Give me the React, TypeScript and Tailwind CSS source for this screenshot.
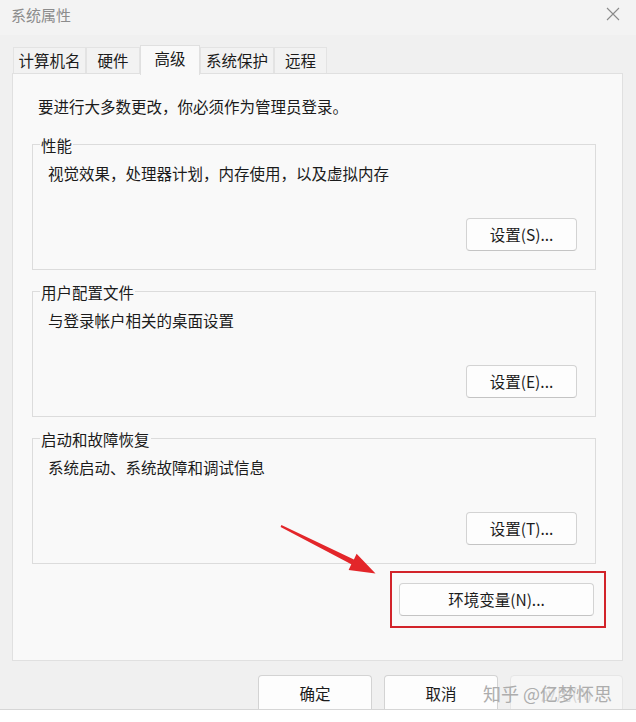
import React from "react";

const font = { fontFamily: '"Noto Sans CJK SC", "Noto Sans", sans-serif' };

function Btn({ label, className = "" }: { label: string; className?: string }) {
  return (
    <div
      className={
        "flex items-center justify-center rounded-[4px] border border-[#d3d3d3] border-b-[#c4c4c4] bg-[#fdfdfd] text-[15.5px] text-[#1b1b1b] " +
        className
      }
    >
      {label}
    </div>
  );
}

function Group({ title, desc, btn }: { title: string; desc: string; btn: string }) {
  return (
    <fieldset className="mt-[13px] border border-[#dcdcdc] pl-[7px] pr-[18px] pb-[18px]">
      <legend className="px-[1px] leading-[18px] text-[15.5px]">{title}</legend>
      <p className="pl-[8px] mt-[9px] leading-[20px]">{desc}</p>
      <div className="flex justify-end mt-[35px]">
        <Btn label={btn} className="w-[111px] h-[33px]" />
      </div>
    </fieldset>
  );
}

export default function App() {
  const tabs = [
    { t: "计算机名", w: "w-[73px]" },
    { t: "硬件", w: "w-[54px]" },
  ];
  return (
    <div className="relative w-[636px] h-[722px] bg-white text-[15.5px] text-[#1b1b1b]" style={font}>
      <div className="h-[710px] bg-[#f0f0f0] border-b border-[#d6d6d6] flex flex-col">
        {/* title bar */}
        <div className="h-[35px] bg-[#f3f3f3] flex items-center justify-between pl-[11px] pr-[16px]">
          <span className="text-[#8c8c8c] text-[15px] leading-[20px] -mt-[5px]">系统属性</span>
          <svg width="14" height="14" viewBox="0 0 14 14" className="-mt-[6px]">
            <path d="M1 1 L13 13 M13 1 L1 13" stroke="#8a8a8a" strokeWidth="1.1" fill="none" />
          </svg>
        </div>
        {/* tabs */}
        <div className="h-[38px] flex items-end pl-[13px]">
          {tabs.map((x) => (
            <div
              key={x.t}
              className={
                "h-[26px] flex items-center justify-center bg-[#f2f2f2] border border-b-0 border-[#e3e3e3] " + x.w
              }
            >
              {x.t}
            </div>
          ))}
          <div className="relative z-10 w-[60px] h-[30px] -mb-[2px] flex items-center justify-center bg-[#f9f9f9] border border-b-0 border-[#e0e0e0] pb-[3px]">
            高级
          </div>
          <div className="h-[26px] w-[74px] flex items-center justify-center bg-[#f2f2f2] border border-b-0 border-[#e3e3e3]">
            系统保护
          </div>
          <div className="h-[26px] w-[53px] flex items-center justify-center bg-[#f2f2f2] border border-b-0 border-[#e3e3e3]">
            远程
          </div>
        </div>
        {/* panel */}
        <div className="relative ml-[12px] w-[611px] h-[589px] border border-[#e0e0e0] bg-[#f9f9f9] pl-[19px] pr-[26px]">
          <p className="pt-[22px] pl-[6px] leading-[20px] mb-[20px]">要进行大多数更改，你必须作为管理员登录。</p>
          <Group title="性能" desc="视觉效果，处理器计划，内存使用，以及虚拟内存" btn="设置(S)..." />
          <Group title="用户配置文件" desc="与登录帐户相关的桌面设置" btn="设置(E)..." />
          <Group title="启动和故障恢复" desc="系统启动、系统故障和调试信息" btn="设置(T)..." />
          <div className="flex justify-end -mr-[10px] mt-[7px]">
            <div className="border-2 border-[#d2232a] pt-[10px] pb-[10px] pl-[7px] pr-[10px]">
              <Btn label="环境变量(N)..." className="w-[195px] h-[33px]" />
            </div>
          </div>
        </div>
        {/* bottom buttons */}
        <div className="h-[48px] overflow-hidden flex justify-end gap-[12px] pr-[13px] pt-[14px]">
          <Btn label="确定" className="w-[114px] h-[38px] shrink-0" />
          <Btn label="取消" className="w-[114px] h-[38px] shrink-0" />
          <div className="w-[113px] h-[38px] shrink-0 flex items-center justify-center rounded-[4px] border border-[#e6e6e6] bg-[#f6f6f6] text-[#d4d4d4]">
            应用(A)
          </div>
        </div>
      </div>
      {/* watermark */}
      <div className="absolute left-[483px] top-[681px] text-[18px] leading-[24px] text-[#adadad] whitespace-nowrap">
        知乎 @亿梦怀思
      </div>
      {/* red arrow */}
      <svg className="absolute left-0 top-0 pointer-events-none" width="636" height="722" viewBox="0 0 636 722">
        <polygon
          points="281.4,525.1 353.9,559.4 356.6,553.8 375.5,573.5 348.6,569.9 351.3,564.2 280.6,526.9"
          fill="#e3262a"
        />
      </svg>
    </div>
  );
}
